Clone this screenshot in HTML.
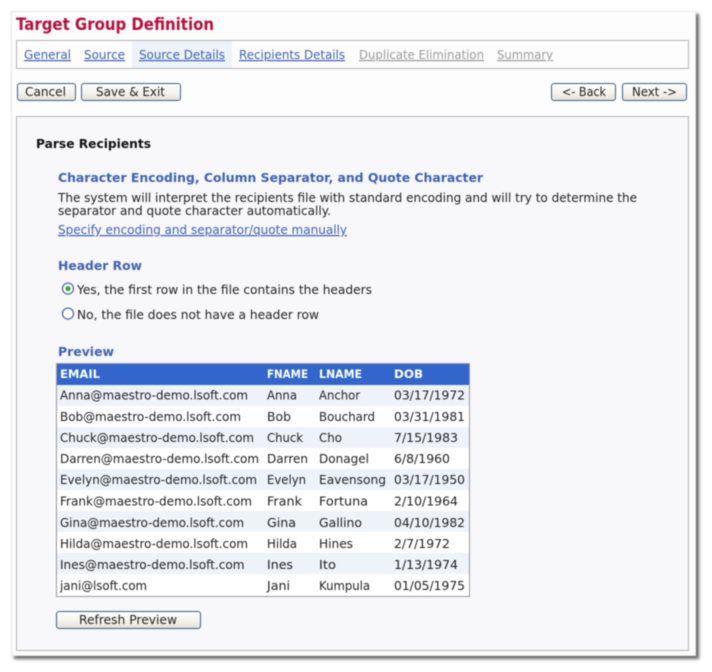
<!DOCTYPE html>
<html><head><meta charset="utf-8"><title>Target Group Definition</title>
<style>
html,body{margin:0;padding:0;background:#fff;width:712px;height:672px;overflow:hidden}
#p{position:relative;width:712px;height:672px;overflow:hidden;filter:blur(.5px)}
#p div{position:absolute;box-sizing:border-box}
.btn{border:1px solid #3a5f85;border-radius:3px;background:linear-gradient(#fff,#f3f1ea 60%,#e4e1d8)}
svg{position:absolute;left:0;top:.4px}
text{font-family:"DejaVu Sans",sans-serif;font-size:12.2px;fill:#222}
.l{fill:#3d62b4;text-decoration:underline}
.g{fill:#9a9a9a;text-decoration:underline}
.h{font-weight:bold;fill:#3d62b4;font-size:12.5px}
.t{font-weight:bold;fill:#fff;font-size:11.6px}
</style></head><body><div id="p">
<div style="left:11px;top:11px;width:685px;height:645px;background:#fefdfe;border:1px solid #e6e6e6;box-shadow:3px 3px 3px #666"></div>
<div style="left:16px;top:40px;width:673px;height:29px;border:1px solid #b4b4b4;background:#fefdfe"></div>
<div style="left:132px;top:41px;width:100px;height:27px;background:#eef2f9"></div>
<div class="btn" style="left:17px;top:83px;width:59px;height:18px"></div>
<div class="btn" style="left:81px;top:83px;width:100px;height:18px"></div>
<div class="btn" style="left:551px;top:83px;width:65px;height:18px"></div>
<div class="btn" style="left:622px;top:83px;width:65px;height:18px"></div>
<div style="left:16px;top:116px;width:673px;height:535px;background:#f8f7fa;border:1px solid #b4b4b4"></div>
<div style="left:55.5px;top:363px;width:414px;height:234px;background:#fff;border:1px solid #999"></div>
<div style="left:56.5px;top:364px;width:412px;height:21px;background:#3366cc"></div>
<div style="left:56.5px;top:385px;width:412px;height:21px;background:#eef2f9"></div>
<div style="left:56.5px;top:427px;width:412px;height:21px;background:#eef2f9"></div>
<div style="left:56.5px;top:469px;width:412px;height:21px;background:#eef2f9"></div>
<div style="left:56.5px;top:511px;width:412px;height:21px;background:#eef2f9"></div>
<div style="left:56.5px;top:553px;width:412px;height:21px;background:#eef2f9"></div>
<div class="btn" style="left:56px;top:611px;width:145px;height:18px"></div>
<svg width="712" height="672" viewBox="0 0 712 672">
<text x="16" y="30" textLength="198" lengthAdjust="spacingAndGlyphs" style="font-size:16.8px;font-weight:bold;fill:#b8103c">Target Group Definition</text>
<text class="l" x="24" y="59" textLength="47" lengthAdjust="spacingAndGlyphs">General</text>
<text class="l" x="84" y="59" textLength="41" lengthAdjust="spacingAndGlyphs">Source</text>
<text class="l" x="139" y="59" textLength="86" lengthAdjust="spacingAndGlyphs">Source Details</text>
<text class="l" x="239" y="59" textLength="106" lengthAdjust="spacingAndGlyphs">Recipients Details</text>
<text class="g" x="359" y="59" textLength="125" lengthAdjust="spacingAndGlyphs">Duplicate Elimination</text>
<text class="g" x="497" y="59" textLength="56" lengthAdjust="spacingAndGlyphs">Summary</text>
<text x="25" y="96" textLength="41" lengthAdjust="spacingAndGlyphs">Cancel</text>
<text x="96" y="96" textLength="69" lengthAdjust="spacingAndGlyphs">Save &amp; Exit</text>
<text x="562" y="96" textLength="44" lengthAdjust="spacingAndGlyphs">&lt;- Back</text>
<text x="632" y="96" textLength="45" lengthAdjust="spacingAndGlyphs">Next -&gt;</text>
<text x="36" y="148" textLength="115" lengthAdjust="spacingAndGlyphs" style="font-weight:bold;font-size:12.5px;fill:#111">Parse Recipients</text>
<text class="h" x="58" y="182" textLength="425" lengthAdjust="spacingAndGlyphs">Character Encoding, Column Separator, and Quote Character</text>
<text x="58" y="202" textLength="579" lengthAdjust="spacingAndGlyphs">The system will interpret the recipients file with standard encoding and will try to determine the</text>
<text x="58" y="215" textLength="273" lengthAdjust="spacingAndGlyphs">separator and quote character automatically.</text>
<text class="l" x="58" y="234" textLength="289" lengthAdjust="spacingAndGlyphs">Specify encoding and separator/quote manually</text>
<text class="h" x="58" y="270" textLength="84" lengthAdjust="spacingAndGlyphs">Header Row</text>
<circle cx="68" cy="288.6" r="5.5" fill="#fff" stroke="#4a6a90" stroke-width="1.2"/>
<circle cx="68" cy="288.6" r="2.6" fill="#3fa34d"/>
<text x="77" y="294" textLength="295" lengthAdjust="spacingAndGlyphs">Yes, the first row in the file contains the headers</text>
<circle cx="68" cy="313.6" r="5.5" fill="#fff" stroke="#4a6a90" stroke-width="1.2"/>
<text x="77" y="319" textLength="242" lengthAdjust="spacingAndGlyphs">No, the file does not have a header row</text>
<text class="h" x="58" y="356" textLength="56" lengthAdjust="spacingAndGlyphs">Preview</text>
<text class="t" x="60" y="378" textLength="40" lengthAdjust="spacingAndGlyphs">EMAIL</text>
<text class="t" x="267" y="378" textLength="41" lengthAdjust="spacingAndGlyphs">FNAME</text>
<text class="t" x="319" y="378" textLength="43" lengthAdjust="spacingAndGlyphs">LNAME</text>
<text class="t" x="394" y="378" textLength="29" lengthAdjust="spacingAndGlyphs">DOB</text>

<text x="60" y="399.5" textLength="188" lengthAdjust="spacingAndGlyphs">Anna@maestro-demo.lsoft.com</text>
<text x="267" y="399.5" textLength="30" lengthAdjust="spacingAndGlyphs">Anna</text>
<text x="319" y="399.5" textLength="41" lengthAdjust="spacingAndGlyphs">Anchor</text>
<text x="394" y="399.5" textLength="71" lengthAdjust="spacingAndGlyphs">03/17/1972</text>

<text x="60" y="421" textLength="181" lengthAdjust="spacingAndGlyphs">Bob@maestro-demo.lsoft.com</text>
<text x="267" y="421" textLength="24" lengthAdjust="spacingAndGlyphs">Bob</text>
<text x="319" y="421" textLength="56" lengthAdjust="spacingAndGlyphs">Bouchard</text>
<text x="394" y="421" textLength="71" lengthAdjust="spacingAndGlyphs">03/31/1981</text>

<text x="60" y="442" textLength="194" lengthAdjust="spacingAndGlyphs">Chuck@maestro-demo.lsoft.com</text>
<text x="267" y="442" textLength="36" lengthAdjust="spacingAndGlyphs">Chuck</text>
<text x="319" y="442" textLength="23" lengthAdjust="spacingAndGlyphs">Cho</text>
<text x="394" y="442" textLength="64" lengthAdjust="spacingAndGlyphs">7/15/1983</text>

<text x="60" y="463" textLength="199" lengthAdjust="spacingAndGlyphs">Darren@maestro-demo.lsoft.com</text>
<text x="267" y="463" textLength="41" lengthAdjust="spacingAndGlyphs">Darren</text>
<text x="319" y="463" textLength="50" lengthAdjust="spacingAndGlyphs">Donagel</text>
<text x="394" y="463" textLength="56" lengthAdjust="spacingAndGlyphs">6/8/1960</text>

<text x="60" y="484" textLength="197" lengthAdjust="spacingAndGlyphs">Evelyn@maestro-demo.lsoft.com</text>
<text x="267" y="484" textLength="39" lengthAdjust="spacingAndGlyphs">Evelyn</text>
<text x="319" y="484" textLength="67" lengthAdjust="spacingAndGlyphs">Eavensong</text>
<text x="394" y="484" textLength="71" lengthAdjust="spacingAndGlyphs">03/17/1950</text>

<text x="60" y="505.5" textLength="192" lengthAdjust="spacingAndGlyphs">Frank@maestro-demo.lsoft.com</text>
<text x="267" y="505.5" textLength="35" lengthAdjust="spacingAndGlyphs">Frank</text>
<text x="319" y="505.5" textLength="49" lengthAdjust="spacingAndGlyphs">Fortuna</text>
<text x="394" y="505.5" textLength="64" lengthAdjust="spacingAndGlyphs">2/10/1964</text>

<text x="60" y="527" textLength="184" lengthAdjust="spacingAndGlyphs">Gina@maestro-demo.lsoft.com</text>
<text x="267" y="527" textLength="29" lengthAdjust="spacingAndGlyphs">Gina</text>
<text x="319" y="527" textLength="43" lengthAdjust="spacingAndGlyphs">Gallino</text>
<text x="394" y="527" textLength="71" lengthAdjust="spacingAndGlyphs">04/10/1982</text>

<text x="60" y="548" textLength="188" lengthAdjust="spacingAndGlyphs">Hilda@maestro-demo.lsoft.com</text>
<text x="267" y="548" textLength="30" lengthAdjust="spacingAndGlyphs">Hilda</text>
<text x="319" y="548" textLength="34" lengthAdjust="spacingAndGlyphs">Hines</text>
<text x="394" y="548" textLength="56" lengthAdjust="spacingAndGlyphs">2/7/1972</text>

<text x="60" y="569" textLength="184.5" lengthAdjust="spacingAndGlyphs">Ines@maestro-demo.lsoft.com</text>
<text x="267" y="569" textLength="26" lengthAdjust="spacingAndGlyphs">Ines</text>
<text x="319" y="569" textLength="17" lengthAdjust="spacingAndGlyphs">Ito</text>
<text x="394" y="569" textLength="64" lengthAdjust="spacingAndGlyphs">1/13/1974</text>

<text x="60" y="590" textLength="87" lengthAdjust="spacingAndGlyphs">jani@lsoft.com</text>
<text x="267" y="590" textLength="23" lengthAdjust="spacingAndGlyphs">Jani</text>
<text x="319" y="590" textLength="51" lengthAdjust="spacingAndGlyphs">Kumpula</text>
<text x="394" y="590" textLength="71" lengthAdjust="spacingAndGlyphs">01/05/1975</text>

<text x="79" y="624" textLength="98" lengthAdjust="spacingAndGlyphs">Refresh Preview</text>
</svg>
</div></body></html>
